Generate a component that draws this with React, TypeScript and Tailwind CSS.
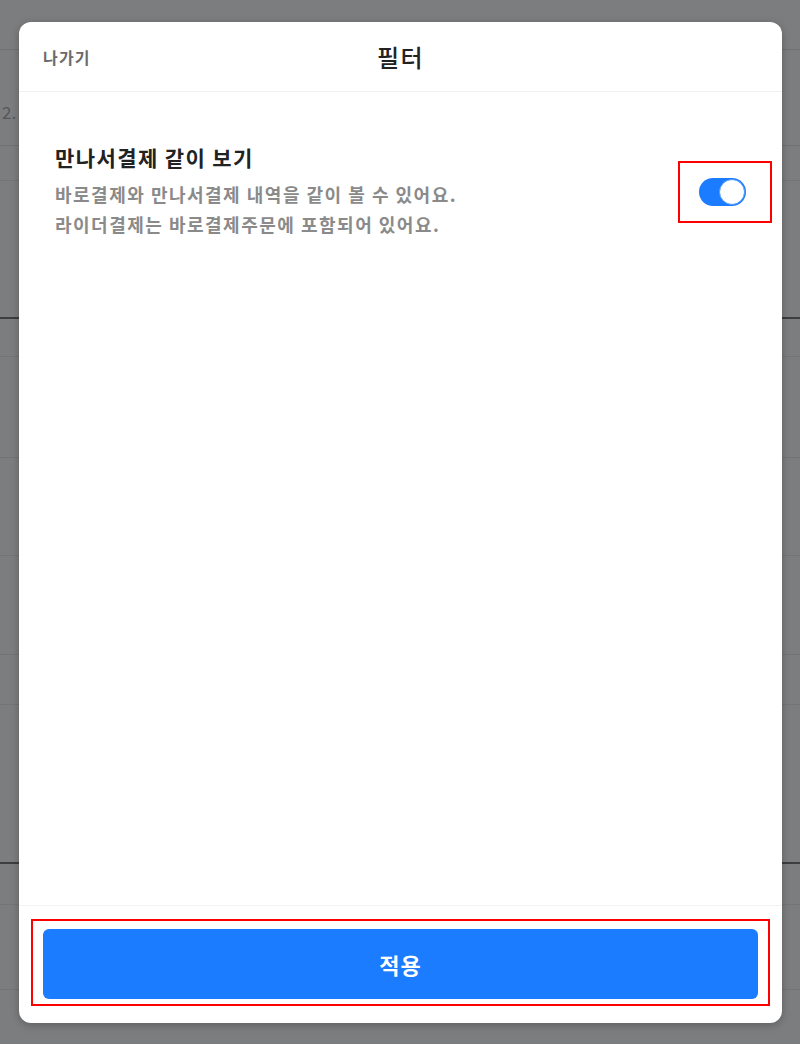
import React from 'react';

const bgRows = [
  { h: 50, line: 'border-[#6f7072]' },
  { h: 96, line: 'border-[#6f7072]', text: '2.' },
  { h: 35, line: 'border-[#737476]' },
  { h: 138, line: 'border-[#3d3e40] border-b-2' },
  { h: 38, line: 'border-[#737476]' },
  { h: 101, line: 'border-[#737476]' },
  { h: 98, line: 'border-[#737476]' },
  { h: 99, line: 'border-[#737476]' },
  { h: 50, line: 'border-[#737476]' },
  { h: 159, line: 'border-[#3d3e40] border-b-2' },
  { h: 41, line: 'border-[#737476]' },
  { h: 85, line: 'border-[#737476]' },
];

function Toggle({ on }: { on: boolean }) {
  return (
    <div
      className={`w-[47px] h-[28px] rounded-full flex items-center px-[1px] ${
        on ? 'bg-[#1b7cff] justify-end' : 'bg-[#d6d6d6] justify-start'
      }`}
    >
      <div className="w-[26px] h-[26px] rounded-full bg-white border border-[#4a95ff]" />
    </div>
  );
}

export default function App() {
  return (
    <div
      className="relative w-[800px] h-[1044px] overflow-hidden bg-[#7c7d7f]"
      style={{ fontFamily: '"Noto Sans CJK KR", "Noto Sans", sans-serif' }}
    >
      {/* page underneath the dim overlay */}
      <div className="flex flex-col">
        {bgRows.map((row, i) => (
          <div
            key={i}
            className={`border-b ${row.line} flex items-start`}
            style={{ height: row.h }}
          >
            {row.text && (
              <span className="mt-[49px] ml-[2px] text-[17px] leading-[26px] text-[#55575a]">{row.text}</span>
            )}
          </div>
        ))}
      </div>

      {/* filter sheet */}
      <div className="absolute left-[19px] top-[22px] w-[763px] h-[1001px] bg-white rounded-[12px] shadow-[0_2px_8px_rgba(0,0,0,0.25)] flex flex-col overflow-hidden">
        <div className="h-[70px] shrink-0 grid grid-cols-3 items-center px-[24px] border-b border-[#f0f0f0]">
          <button className="justify-self-start text-[16px] tracking-[1.2px] font-bold text-[#6b6b6b]">나가기</button>
          <h1 className="justify-self-center text-[24px] tracking-[1.5px] font-medium text-[#222]">필터</h1>
          <div />
        </div>

        <div className="flex-1 flex items-start justify-between pl-[36px] pr-[10px] pt-[51px]">
          <div>
            <h2 className="text-[21px] leading-[28px] tracking-[1.4px] font-semibold text-[#222]">만나서결제 같이 보기</h2>
            <p className="mt-[8px] text-[18px] leading-[30px] tracking-[1.5px] font-bold text-[#8a8a8a]">
              바로결제와 만나서결제 내역을 같이 볼 수 있어요.
              <br />
              라이더결제는 바로결제주문에 포함되어 있어요.
            </p>
          </div>
          <div className="mt-[18px] w-[94px] h-[62px] border-2 border-[#ff0000] flex items-center pl-[19px]">
            <Toggle on />
          </div>
        </div>

        <div className="shrink-0 border-t border-[#f2f2f2] px-[12px] pt-[13px] pb-[17px]">
          <div className="border-2 border-[#ff0000] px-[10px] pt-[8px] pb-[5px]">
            <button className="w-full h-[70px] rounded-[6px] bg-[#1b7cff] text-white text-[22px] tracking-[1px] font-bold">
              적용
            </button>
          </div>
        </div>
      </div>
    </div>
  );
}
